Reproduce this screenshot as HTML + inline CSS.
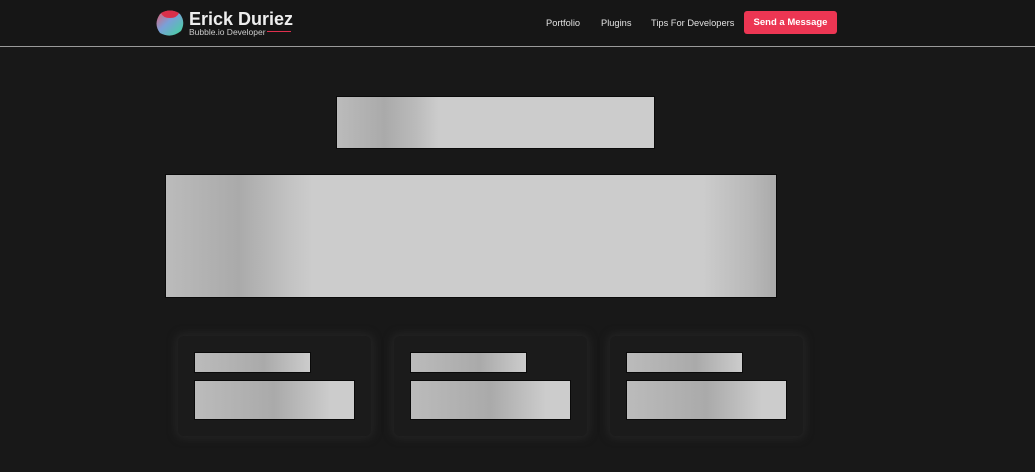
<!DOCTYPE html>
<html><head><style>
body{margin:0;width:1035px;height:472px;background:#181818;font-family:"Liberation Sans",sans-serif;position:relative;overflow:hidden}
.a{position:absolute}
.sk{position:absolute;background:#ccc;box-shadow:0 0 0 1px #0a0a0a}
.hdr{top:0;left:0;width:1035px;height:46px;border-bottom:1px solid #9a9a9a;background:#161616}
.nav{font-size:9.3px;color:#e0e0e0;top:18px;white-space:nowrap}
.card{position:absolute;top:336px;width:193px;height:100px;background:#1b1b1b;border-radius:6px;box-shadow:0 0 8px 3px #232323}
</style></head><body>
<div class="a hdr"></div>
<svg class="a" style="left:154px;top:8px" width="32" height="30" viewBox="0 0 32 30">
<defs><linearGradient id="g" x1="0" y1="0" x2="1" y2="1"><stop offset="0" stop-color="#e85a6a"/><stop offset=".45" stop-color="#7aa0d8"/><stop offset="1" stop-color="#3fd69a"/></linearGradient></defs>
<path d="M6 6 Q16 -1 26 6 Q32 14 27 23 Q17 31 6 25 Q-1 16 6 6Z" fill="url(#g)"/>
<path d="M7 5 Q16 0 25 5 Q23 10 16 10 Q9 10 7 5Z" fill="#d9304a"/>
</svg>
<div class="a" style="left:189px;top:9px;font-size:18px;font-weight:bold;color:#eee">Erick Duriez</div>
<div class="a" style="left:189px;top:27px;font-size:8.5px;color:#ccc">Bubble.io Developer</div>
<div class="a" style="left:267px;top:31px;width:24px;height:1px;background:#e0304e"></div>
<div class="a nav" style="left:546px">Portfolio</div>
<div class="a nav" style="left:601px">Plugins</div>
<div class="a nav" style="left:651px">Tips For Developers</div>
<div class="a" style="left:744px;top:11px;width:93px;height:23px;background:#ec3653;border-radius:3px;color:#fff;font-size:9.5px;font-weight:bold;text-align:center;line-height:23px">Send a Message</div>
<div class="sk" style="left:337px;top:97px;width:317px;height:51px;background:linear-gradient(90deg,#bbb 0%,#aaa 15%,#bbb 25%,#ccc 32%,#ccc 100%)"></div>
<div class="sk" style="left:166px;top:175px;width:610px;height:122px;background:linear-gradient(90deg,#bbb 0%,#aaa 12%,#c2c2c2 20%,#ccc 24%,#ccc 88%,#b8b8b8 96%,#aaa 100%)"></div>
<div class="card" style="left:178px"></div>
<div class="card" style="left:394px"></div>
<div class="card" style="left:610px"></div>
<div class="sk" style="left:195px;top:353px;width:115px;height:19px;background:linear-gradient(90deg,#bbb,#aaa 60%,#ccc)"></div>
<div class="sk" style="left:195px;top:381px;width:159px;height:38px;background:linear-gradient(90deg,#bbb,#aaa 50%,#ccc 85%)"></div>
<div class="sk" style="left:411px;top:353px;width:115px;height:19px;background:linear-gradient(90deg,#bbb,#aaa 60%,#ccc)"></div>
<div class="sk" style="left:411px;top:381px;width:159px;height:38px;background:linear-gradient(90deg,#bbb,#aaa 50%,#ccc 85%)"></div>
<div class="sk" style="left:627px;top:353px;width:115px;height:19px;background:linear-gradient(90deg,#bbb,#aaa 60%,#ccc)"></div>
<div class="sk" style="left:627px;top:381px;width:159px;height:38px;background:linear-gradient(90deg,#bbb,#aaa 50%,#ccc 85%)"></div>
</body></html>
